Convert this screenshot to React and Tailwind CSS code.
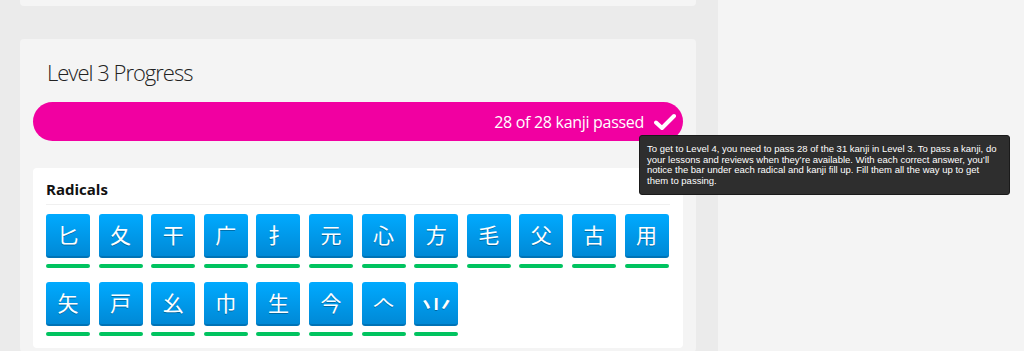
import React from 'react';

const row1 = ['匕', '夂', '干', '广', '扌', '元', '心', '方', '毛', '父', '古', '用'];
const row2 = ['矢', '戸', '幺', '巾', '生', '今', '𠆢', '⺌'];

function Tile({ ch }) {
  const small = ch === '⺌';
  return (
    <div className="flex flex-col gap-[6px]">
      <div
        className="w-[44px] h-[44px] rounded-[3px] flex items-center justify-center bg-gradient-to-b from-[#00aaff] to-[#0089d6] border-b-2 border-[#0073b6] text-white [text-shadow:0_1px_0_rgba(0,0,0,0.3)]"
        style={{ fontFamily: '"Noto Sans CJK JP", sans-serif' }}
      >
        {small ? (
          <span className="text-[34px] leading-[18px] relative top-[9px]">{ch}</span>
        ) : (
          <span className="text-[21px]">{ch}</span>
        )}
      </div>
      <div className="w-[44px] h-[4px] rounded-full bg-[#00c35f]" />
    </div>
  );
}

export default function App() {
  return (
    <div className="w-[1024px] h-[351px] overflow-hidden flex bg-[#f4f4f4]" style={{ fontFamily: '"Open Sans", sans-serif' }}>
      <div className="w-[718px] shrink-0 bg-[#ebebeb] pl-[20px] pr-[22px] flex flex-col">
        <div className="h-[6px] shrink-0 bg-[#f5f5f5] rounded-b-[4px]" />
        <div className="shrink-0 mt-[33px] bg-[#f4f4f4] rounded-[4px] px-[13px] pt-[18px] pb-[4px]">
          <h2 className="ml-[14px] text-[22px] leading-[30px] text-[#222] font-light tracking-[-1px]">Level 3 Progress</h2>
          <div className="mt-[15px] h-[39px] rounded-full bg-[#f100a1] flex items-center justify-end pr-[7px] text-white">
            <span className="text-[16px] tracking-[-0.3px]">28 of 28 kanji passed</span>
            <svg className="ml-[10px]" width="22" height="18" viewBox="0 0 22 18">
              <path d="M2 9.5 L8 15 L20 3" fill="none" stroke="white" strokeWidth="4" strokeLinecap="round" strokeLinejoin="round" />
            </svg>
          </div>
          <div className="mt-[27px] bg-white rounded-[4px] px-[13px] pt-[10px] pb-[12px]">
            <h3 className="text-[15px] font-bold text-[#111] leading-[22px] pb-[4px] border-b border-[#f0f0f0]">Radicals</h3>
            <div className="mt-[9px] flex flex-wrap gap-x-[8.6px] gap-y-[14px]">
              {row1.map((c) => <Tile key={c} ch={c} />)}
              {row2.map((c) => <Tile key={c} ch={c} />)}
            </div>
          </div>
        </div>
      </div>
      <div className="relative flex-1">
        <div
          className="absolute left-[-79px] top-[135px] w-[371px] bg-[#2e2e2e] border border-[#1a1a1a] rounded-[3px] px-[7px] pt-[8px] pb-[7px] text-white text-[9.5px] leading-[10.7px]"
          style={{ fontFamily: '"Liberation Sans", sans-serif' }}
        >
          To get to Level 4, you need to pass 28 of the 31 kanji in Level 3. To pass a kanji, do your lessons and reviews when they’re available. With each correct answer, you’ll notice the bar under each radical and kanji fill up. Fill them all the way up to get them to passing.
        </div>
      </div>
    </div>
  );
}
